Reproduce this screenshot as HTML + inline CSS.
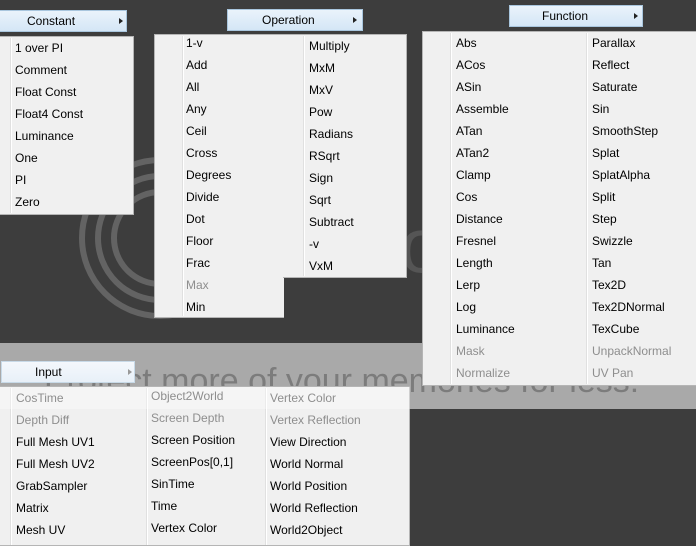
<!DOCTYPE html><html><head><style>
body{margin:0;width:696px;height:538px;background:#3d3d3d;position:relative;overflow:hidden;font-family:"Liberation Sans",sans-serif;font-size:12px;color:#000}
.a{position:absolute}
.hd{position:absolute;height:22px;border:1px solid #a9c6de;background:linear-gradient(#eaf3fb,#d4e6f6);box-sizing:border-box;line-height:20px}
.hd .t{position:absolute;top:0}
.hd .ar{position:absolute;top:7px;width:0;height:0;border-left:4px solid #222;border-top:3.5px solid transparent;border-bottom:3.5px solid transparent}
.m{position:absolute;background:#f0f0f0;border:1px solid #b5b5b5;box-sizing:border-box}
.g{position:absolute;width:1px;background:#e0e0e0;border-right:1px solid #fff}
.it{position:absolute;height:22px;line-height:22px;white-space:nowrap}
.d{color:#8e8e8e}
</style></head><body>
<svg class="a" style="left:0;top:0" width="696" height="538">
<g fill="none" stroke="#636363" stroke-width="6">
<circle cx="160" cy="238" r="78"/><circle cx="160" cy="238" r="62"/><circle cx="160" cy="238" r="46"/>
</g>
<text x="248" y="272" font-family="Liberation Sans" font-size="78" fill="#555">photobucket</text>
</svg>
<div class="a" style="left:0;top:343px;width:696px;height:66px;background:#a9a9a9"></div>
<div class="a" style="left:44px;top:362px;font-size:34px;color:#7c7c7c;white-space:nowrap">Protect more of your memories for less!</div>

<div class="hd" style="left:-2px;top:10px;width:129px"><span class="t" style="left:28px">Constant</span><span class="ar" style="left:120px"></span></div>
<div class="m" style="left:-1px;top:36px;width:135px;height:179px"><div class="g" style="left:10px;top:1px;bottom:1px"></div></div>
<div class="a" style="left:15px;top:37px">
<div class="it" style="top:0">1 over PI</div><div class="it" style="top:22px">Comment</div><div class="it" style="top:44px">Float Const</div><div class="it" style="top:66px">Float4 Const</div><div class="it" style="top:88px">Luminance</div><div class="it" style="top:110px">One</div><div class="it" style="top:132px">PI</div><div class="it" style="top:154px">Zero</div></div>

<div class="hd" style="left:227px;top:9px;width:136px"><span class="t" style="left:34px">Operation</span><span class="ar" style="left:125px"></span></div>
<div class="m" style="left:154px;top:34px;width:130px;height:284px;border-right:none"><div class="g" style="left:27px;top:1px;bottom:1px"></div></div>
<div class="m" style="left:283px;top:34px;width:124px;height:244px;border-left:none"><div class="g" style="left:20px;top:1px;bottom:1px"></div></div>
<div class="a" style="left:186px;top:32px">
<div class="it" style="top:0">1-v</div><div class="it" style="top:22px">Add</div><div class="it" style="top:44px">All</div><div class="it" style="top:66px">Any</div><div class="it" style="top:88px">Ceil</div><div class="it" style="top:110px">Cross</div><div class="it" style="top:132px">Degrees</div><div class="it" style="top:154px">Divide</div><div class="it" style="top:176px">Dot</div><div class="it" style="top:198px">Floor</div><div class="it" style="top:220px">Frac</div><div class="it d" style="top:242px">Max</div><div class="it" style="top:264px">Min</div></div>
<div class="a" style="left:309px;top:35px">
<div class="it" style="top:0">Multiply</div><div class="it" style="top:22px">MxM</div><div class="it" style="top:44px">MxV</div><div class="it" style="top:66px">Pow</div><div class="it" style="top:88px">Radians</div><div class="it" style="top:110px">RSqrt</div><div class="it" style="top:132px">Sign</div><div class="it" style="top:154px">Sqrt</div><div class="it" style="top:176px">Subtract</div><div class="it" style="top:198px">-v</div><div class="it" style="top:220px">VxM</div></div>

<div class="hd" style="left:509px;top:5px;width:134px"><span class="t" style="left:32px">Function</span><span class="ar" style="left:124px"></span></div>
<div class="m" style="left:422px;top:31px;width:276px;height:355px"><div class="g" style="left:27px;top:1px;bottom:1px"></div><div class="g" style="left:163px;top:1px;bottom:1px"></div></div>
<div class="a" style="left:456px;top:32px">
<div class="it" style="top:0">Abs</div><div class="it" style="top:22px">ACos</div><div class="it" style="top:44px">ASin</div><div class="it" style="top:66px">Assemble</div><div class="it" style="top:88px">ATan</div><div class="it" style="top:110px">ATan2</div><div class="it" style="top:132px">Clamp</div><div class="it" style="top:154px">Cos</div><div class="it" style="top:176px">Distance</div><div class="it" style="top:198px">Fresnel</div><div class="it" style="top:220px">Length</div><div class="it" style="top:242px">Lerp</div><div class="it" style="top:264px">Log</div><div class="it" style="top:286px">Luminance</div><div class="it d" style="top:308px">Mask</div><div class="it d" style="top:330px">Normalize</div></div>
<div class="a" style="left:592px;top:32px">
<div class="it" style="top:0">Parallax</div><div class="it" style="top:22px">Reflect</div><div class="it" style="top:44px">Saturate</div><div class="it" style="top:66px">Sin</div><div class="it" style="top:88px">SmoothStep</div><div class="it" style="top:110px">Splat</div><div class="it" style="top:132px">SplatAlpha</div><div class="it" style="top:154px">Split</div><div class="it" style="top:176px">Step</div><div class="it" style="top:198px">Swizzle</div><div class="it" style="top:220px">Tan</div><div class="it" style="top:242px">Tex2D</div><div class="it" style="top:264px">Tex2DNormal</div><div class="it" style="top:286px">TexCube</div><div class="it d" style="top:308px">UnpackNormal</div><div class="it d" style="top:330px">UV Pan</div></div>

<div class="hd" style="left:1px;top:361px;width:134px;background:linear-gradient(#f4f8fc,#e8f0f8);border-color:#c8dae8"><span class="t" style="left:33px">Input</span><span class="ar" style="left:126px;border-left-color:#999"></span></div>
<div class="m" style="left:-1px;top:386px;width:411px;height:160px;background:#f0f0f0"><div class="g" style="left:10px;top:1px;bottom:0"></div><div class="g" style="left:146px;top:1px;bottom:0"></div><div class="g" style="left:265px;top:1px;bottom:0"></div></div>
<div class="a" style="left:0;top:387px;width:410px;height:22px;background:rgba(255,255,255,0.35)"></div>
<div class="a" style="left:16px;top:387px">
<div class="it d" style="top:0">CosTime</div><div class="it d" style="top:22px">Depth Diff</div><div class="it" style="top:44px">Full Mesh UV1</div><div class="it" style="top:66px">Full Mesh UV2</div><div class="it" style="top:88px">GrabSampler</div><div class="it" style="top:110px">Matrix</div><div class="it" style="top:132px">Mesh UV</div></div>
<div class="a" style="left:151px;top:385px">
<div class="it d" style="top:0">Object2World</div><div class="it d" style="top:22px">Screen Depth</div><div class="it" style="top:44px">Screen Position</div><div class="it" style="top:66px">ScreenPos[0,1]</div><div class="it" style="top:88px">SinTime</div><div class="it" style="top:110px">Time</div><div class="it" style="top:132px">Vertex Color</div></div>
<div class="a" style="left:270px;top:387px">
<div class="it d" style="top:0">Vertex Color</div><div class="it d" style="top:22px">Vertex Reflection</div><div class="it" style="top:44px">View Direction</div><div class="it" style="top:66px">World Normal</div><div class="it" style="top:88px">World Position</div><div class="it" style="top:110px">World Reflection</div><div class="it" style="top:132px">World2Object</div></div>
</body></html>
